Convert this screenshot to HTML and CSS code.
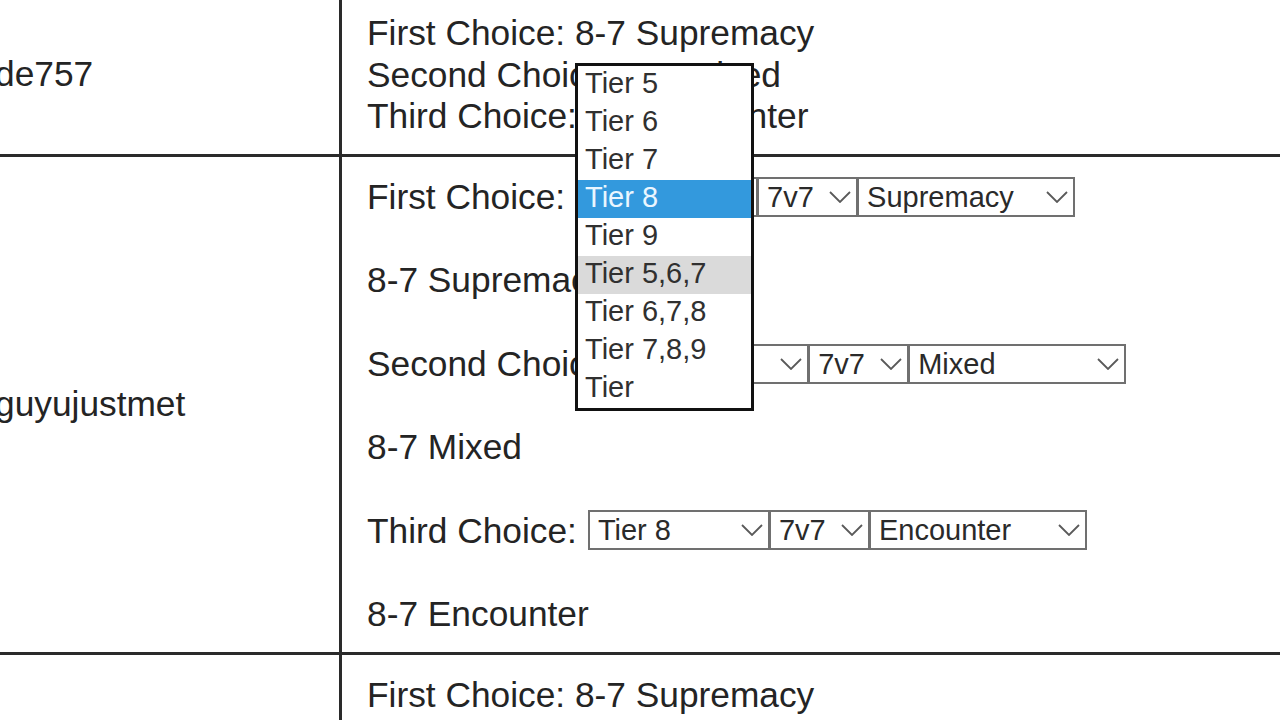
FILE: index.html
```html
<!DOCTYPE html>
<html lang="en">
<head>
<meta charset="utf-8">
<title>Choices</title>
<link rel="stylesheet" href="styles.css">
</head>
<body>
<div class="page">
  <div class="grid">
    <div class="name">de757</div>
    <div class="choices">
      <div class="text-block">
        <div class="line">First Choice: 8-7 Supremacy</div>
        <div class="line">Second Choice: 8-7 Mixed</div>
        <div class="line">Third Choice: 8-7 Encounter</div>
      </div>
    </div>

    <div class="name">guyujustmet</div>
    <div class="choices">
      <div class="form-block">
        <div class="line pick">
          <span class="label">First Choice:</span><span class="sel tier"><span>Tier 8</span><svg class="chev" viewBox="0 0 22 12"><path d="M1 1 L11 11 L21 1"/></svg></span><span class="sel mode"><span>7v7</span><svg class="chev" viewBox="0 0 22 12"><path d="M1 1 L11 11 L21 1"/></svg></span><span class="sel type"><span>Supremacy</span><svg class="chev" viewBox="0 0 22 12"><path d="M1 1 L11 11 L21 1"/></svg></span>
        </div>
        <div class="line">8-7 Supremacy</div>
        <div class="line pick">
          <span class="label">Second Choice:</span><span class="sel tier"><span>Tier 8</span><svg class="chev" viewBox="0 0 22 12"><path d="M1 1 L11 11 L21 1"/></svg></span><span class="sel mode"><span>7v7</span><svg class="chev" viewBox="0 0 22 12"><path d="M1 1 L11 11 L21 1"/></svg></span><span class="sel type"><span>Mixed</span><svg class="chev" viewBox="0 0 22 12"><path d="M1 1 L11 11 L21 1"/></svg></span>
        </div>
        <div class="line">8-7 Mixed</div>
        <div class="line pick">
          <span class="label">Third Choice:</span><span class="sel tier"><span>Tier 8</span><svg class="chev" viewBox="0 0 22 12"><path d="M1 1 L11 11 L21 1"/></svg></span><span class="sel mode"><span>7v7</span><svg class="chev" viewBox="0 0 22 12"><path d="M1 1 L11 11 L21 1"/></svg></span><span class="sel type"><span>Encounter</span><svg class="chev" viewBox="0 0 22 12"><path d="M1 1 L11 11 L21 1"/></svg></span>
        </div>
        <div class="line">8-7 Encounter</div>
      </div>
    </div>

    <div class="name"></div>
    <div class="choices">
      <div class="text-block">
        <div class="line">First Choice: 8-7 Supremacy</div>
        <div class="line">Second Choice: 8-7 Mixed</div>
        <div class="line">Third Choice: 8-7 Encounter</div>
      </div>
    </div>
  </div>

  <ul class="popup">
    <li class="opt">Tier 5</li>
    <li class="opt">Tier 6</li>
    <li class="opt">Tier 7</li>
    <li class="opt selected">Tier 8</li>
    <li class="opt">Tier 9</li>
    <li class="opt hover">Tier 5,6,7</li>
    <li class="opt">Tier 6,7,8</li>
    <li class="opt">Tier 7,8,9</li>
    <li class="opt">Tier</li>
  </ul>
</div>
</body>
</html>
```

FILE: styles.css
```css
html, body {
  margin: 0;
  padding: 0;
  background: #ffffff;
  overflow: hidden;
}

body {
  width: 1280px;
  height: 720px;
  font-family: "Liberation Sans", Arial, sans-serif;
  color: #242424;
}

.page {
  position: relative;
  width: 1280px;
  height: 720px;
  overflow: hidden;
}

.grid {
  display: grid;
  grid-template-columns: 372px 1000px;
  margin: -10px 0 0 -30px;
  border-top: 3px solid #2a2a2a;
}

.name {
  box-sizing: border-box;
  border-right: 3px solid #2a2a2a;
  border-bottom: 3px solid #2a2a2a;
  padding-left: 25px;
  display: flex;
  align-items: center;
  font-size: 35.3px;
}

.choices {
  border-bottom: 3px solid #2a2a2a;
  padding: 19px 24px 17px 25px;
  font-size: 35.3px;
}

.text-block,
.form-block {
  display: flex;
  flex-direction: column;
}

.form-block {
  gap: 41.7px;
}

.line {
  height: 41.7px;
  line-height: 41.7px;
  white-space: nowrap;
}

.pick {
  display: flex;
  align-items: center;
}

.label {
  margin-right: 11px;
}

.sel {
  box-sizing: border-box;
  height: 40px;
  border: 2px solid #707070;
  background: #ffffff;
  display: inline-flex;
  align-items: center;
  justify-content: space-between;
  padding: 0 5px 0 8px;
  font-size: 29px;
  line-height: 36px;
  color: #2a2a2a;
}

.sel + .sel {
  margin-left: -1px;
}

.tier { width: 182px; }
.mode { width: 101px; }
.type { width: 218px; }

.chev {
  width: 22px;
  height: 12px;
  flex: none;
}

.chev path {
  fill: none;
  stroke: #5a5a5a;
  stroke-width: 1.8;
}

.popup {
  position: absolute;
  left: 575px;
  top: 63px;
  width: 179px;
  margin: 0;
  padding: 0;
  list-style: none;
  box-sizing: border-box;
  border: 3px solid #111111;
  background: #ffffff;
}

.opt {
  height: 38px;
  line-height: 35px;
  padding-left: 7px;
  font-size: 29px;
  color: #303030;
  white-space: nowrap;
}

.opt.selected {
  background: #3399dd;
  color: #eaf6ff;
}

.opt.hover {
  background: #dadada;
}
```
